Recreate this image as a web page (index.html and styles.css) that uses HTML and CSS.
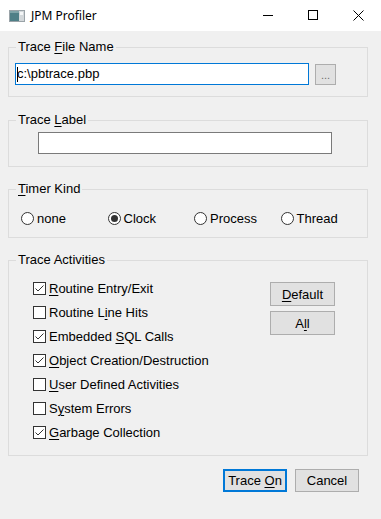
FILE: index.html
```html
<!DOCTYPE html>
<html>
<head>
<meta charset="utf-8">
<link rel="stylesheet" href="styles.css">
</head>
<body>
<div class="window">
  <header class="titlebar">
    <svg class="appicon" width="16" height="12" viewBox="0 0 16 12">
      <rect x="0" y="0" width="16" height="12" fill="#d3d8db"/>
      <rect x="0.5" y="0.5" width="15" height="11" fill="none" stroke="#9aa3a8"/>
      <rect x="1" y="1" width="9" height="10" fill="#4f7f87"/>
      <rect x="1" y="1" width="9" height="2" fill="#7fa3a8"/>
      <rect x="11" y="2" width="3" height="3" fill="#f4f6f7"/>
    </svg>
    <span class="title">JPM Profiler</span>
    <div class="controls">
      <span class="ctl"><svg width="11" height="11" viewBox="0 0 11 11"><line x1="0" y1="5.5" x2="10" y2="5.5" stroke="#000" stroke-width="1"/></svg></span>
      <span class="ctl"><svg width="11" height="11" viewBox="0 0 11 11"><rect x="0.5" y="0.5" width="9" height="9" fill="none" stroke="#000" stroke-width="1"/></svg></span>
      <span class="ctl"><svg width="11" height="11" viewBox="0 0 11 11"><path d="M0.5 0.5 L10.5 10.5 M10.5 0.5 L0.5 10.5" stroke="#000" stroke-width="1"/></svg></span>
    </div>
  </header>

  <main class="dialog">
    <fieldset class="group g-file">
      <legend>Trace <u>F</u>ile Name</legend>
      <div class="content file-row">
        <div class="textbox focused"><span class="caret"></span><span>c:\pbtrace.pbp</span></div>
        <button class="btn browse">...</button>
      </div>
    </fieldset>

    <fieldset class="group g-label">
      <legend>Trace <u>L</u>abel</legend>
      <div class="content">
        <div class="textbox plain"></div>
      </div>
    </fieldset>

    <fieldset class="group g-timer">
      <legend><u>T</u>imer Kind</legend>
      <div class="content radios">
        <label class="radio"><svg width="13" height="13" viewBox="0 0 13 13"><circle cx="6.5" cy="6.5" r="6" fill="#fff" stroke="#333"/></svg><span>none</span></label>
        <label class="radio"><svg width="13" height="13" viewBox="0 0 13 13"><circle cx="6.5" cy="6.5" r="6" fill="#fff" stroke="#333"/><circle cx="6.5" cy="6.5" r="3.5" fill="#333"/></svg><span>Clock</span></label>
        <label class="radio"><svg width="13" height="13" viewBox="0 0 13 13"><circle cx="6.5" cy="6.5" r="6" fill="#fff" stroke="#333"/></svg><span>Process</span></label>
        <label class="radio"><svg width="13" height="13" viewBox="0 0 13 13"><circle cx="6.5" cy="6.5" r="6" fill="#fff" stroke="#333"/></svg><span>Thread</span></label>
      </div>
    </fieldset>

    <fieldset class="group g-act">
      <legend>Trace Activities</legend>
      <div class="content act-body">
        <div class="checks">
          <label class="check"><svg width="13" height="13" viewBox="0 0 13 13"><rect x="0.5" y="0.5" width="12" height="12" fill="#fff" stroke="#333"/><path d="M2.5 6.5 L5 9 L10.5 3.5" fill="none" stroke="#333"/></svg><span><u>R</u>outine Entry/Exit</span></label>
          <label class="check"><svg width="13" height="13" viewBox="0 0 13 13"><rect x="0.5" y="0.5" width="12" height="12" fill="#fff" stroke="#333"/></svg><span>Routine L<u>i</u>ne Hits</span></label>
          <label class="check"><svg width="13" height="13" viewBox="0 0 13 13"><rect x="0.5" y="0.5" width="12" height="12" fill="#fff" stroke="#333"/><path d="M2.5 6.5 L5 9 L10.5 3.5" fill="none" stroke="#333"/></svg><span>Embedded <u>S</u>QL Calls</span></label>
          <label class="check"><svg width="13" height="13" viewBox="0 0 13 13"><rect x="0.5" y="0.5" width="12" height="12" fill="#fff" stroke="#333"/><path d="M2.5 6.5 L5 9 L10.5 3.5" fill="none" stroke="#333"/></svg><span><u>O</u>bject Creation/Destruction</span></label>
          <label class="check"><svg width="13" height="13" viewBox="0 0 13 13"><rect x="0.5" y="0.5" width="12" height="12" fill="#fff" stroke="#333"/></svg><span><u>U</u>ser Defined Activities</span></label>
          <label class="check"><svg width="13" height="13" viewBox="0 0 13 13"><rect x="0.5" y="0.5" width="12" height="12" fill="#fff" stroke="#333"/></svg><span>S<u>y</u>stem Errors</span></label>
          <label class="check"><svg width="13" height="13" viewBox="0 0 13 13"><rect x="0.5" y="0.5" width="12" height="12" fill="#fff" stroke="#333"/><path d="M2.5 6.5 L5 9 L10.5 3.5" fill="none" stroke="#333"/></svg><span><u>G</u>arbage Collection</span></label>
        </div>
        <div class="side-buttons">
          <button class="btn side"><span><u>D</u>efault</span></button>
          <button class="btn side"><span>A<u>l</u>l</span></button>
        </div>
      </div>
    </fieldset>

    <div class="footer">
      <button class="btn foot default"><span>Trace <u>O</u>n</span></button>
      <button class="btn foot"><span>Cancel</span></button>
    </div>
  </main>
</div>
</body>
</html>
```

FILE: styles.css
```css
* { box-sizing: border-box; }
html, body { margin: 0; padding: 0; }
body {
  width: 381px;
  height: 519px;
  background: #f0f0f0;
  font-family: "Liberation Sans", Arial, sans-serif;
  font-size: 13px;
  color: #000;
  overflow: hidden;
}
u { text-decoration: underline; text-underline-offset: 2px; text-decoration-thickness: 1px; }

.titlebar {
  height: 31px;
  background: #fff;
  display: flex;
  align-items: center;
  padding-left: 9px;
}
.appicon { display: block; margin-top: 1px; }
.title {
  margin-left: 6px;
  font-family: "Noto Sans", "Open Sans", sans-serif;
  font-size: 12px;
  color: #000;
}
.controls {
  margin-left: auto;
  display: flex;
  height: 31px;
}
.ctl {
  width: 45px;
  height: 31px;
  display: flex;
  align-items: center;
  justify-content: center;
}
.ctl svg { display: block; }

.dialog {
  padding: 8px 0 0 8px;
  display: flex;
  flex-direction: column;
}

.group {
  margin: 0;
  width: 360px;
  border: 1px solid #dcdcdc;
  padding: 0;
  min-width: 0;
}
.group legend {
  margin-left: 7px;
  padding: 0 2px;
  line-height: 16px;
  height: 16px;
}
.g-label, .g-timer, .g-act { margin-top: 14px; }
.g-label { margin-top: 15px; }

.content { display: flex; }

.g-file .content { padding: 8px 0 11px 6px; }
.file-row { align-items: flex-start; gap: 6px; }
.textbox {
  width: 294px;
  height: 22px;
  background: #fff;
  border: 1px solid #7a7a7a;
  display: flex;
  align-items: center;
  padding-left: 1px;
  line-height: 16px;
}
.textbox.focused { border-color: #0078d7; }
.caret {
  display: inline-block;
  width: 1px;
  height: 15px;
  background: #000;
  margin-right: -1px;
}
.btn {
  font-family: "Liberation Sans", Arial, sans-serif;
  font-size: 13px;
  color: #000;
  background: #e1e1e1;
  border: 1px solid #adadad;
  padding: 0;
  margin: 0;
  display: flex;
  align-items: center;
  justify-content: center;
}
.browse {
  width: 21px;
  height: 21px;
  margin-top: 1px;
  color: #6d6d6d;
  font-size: 11px;
  align-items: flex-end;
  padding-bottom: 4px;
  line-height: 10px;
}

.g-label .content { padding: 4px 0 12px 29px; }

.g-timer .content { padding: 13px 0 11px 12px; }
.radio {
  width: 87px;
  height: 16px;
  display: flex;
  align-items: center;
  gap: 3px;
}
.radio svg, .check svg { display: block; flex: none; }

.g-act .content { padding: 8px 0 11px 24px; }
.checks { display: flex; flex-direction: column; width: 237px; }
.check {
  height: 24px;
  display: flex;
  align-items: center;
  gap: 3px;
}
.side-buttons {
  display: flex;
  flex-direction: column;
  gap: 5px;
  padding-top: 6px;
}
.side {
  width: 65px;
  height: 24px;
}

.footer {
  display: flex;
  justify-content: flex-end;
  gap: 8px;
  margin-top: 13px;
  padding-right: 22px;
}
.foot {
  width: 64px;
  height: 23px;
}
.foot.default { border: 2px solid #0078d7; }
```
